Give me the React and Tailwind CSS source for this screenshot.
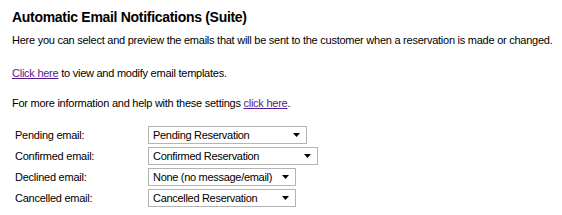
const rows = [
  { label: 'Pending email:', value: 'Pending Reservation', w: 'w-[159px]' },
  { label: 'Confirmed email:', value: 'Confirmed Reservation', w: 'w-[170px]' },
  { label: 'Declined email:', value: 'None (no message/email)', w: 'w-[148px]' },
  { label: 'Cancelled email:', value: 'Cancelled Reservation', w: 'w-[148px]' },
];

const FakeSelect = ({ value, w }) => (
  <div className={`${w} h-[18px] flex items-center justify-between border border-[#b4b4b4] bg-white pl-[4px] pr-[6px]`}>
    <span className="text-[11px] tracking-[-0.3px] leading-none text-black whitespace-nowrap">{value}</span>
    <svg width="7" height="4" viewBox="0 0 7 4"><path d="M0 0h7L3.5 4z" fill="#000" /></svg>
  </div>
);

export default function App() {
  return (
    <div className="w-[562px] h-[215px] overflow-hidden bg-white text-black px-[12px] pt-[7px]" style={{ fontFamily: '"Liberation Sans", Arial, sans-serif' }}>
      <h1 className="text-[14px] tracking-[-0.3px] font-bold leading-[20px]">Automatic Email Notifications (Suite)</h1>
      <p className="text-[11px] tracking-[-0.25px] leading-[13px] mt-[7px] whitespace-nowrap">
        Here you can select and preview the emails that will be sent to the customer when a reservation is made or changed.
      </p>
      <p className="text-[11px] tracking-[-0.25px] leading-[13px] mt-[20px]">
        <span className="text-[#551a8b] underline">Click here</span> to view and modify email templates.
      </p>
      <p className="text-[11px] tracking-[-0.25px] leading-[13px] mt-[17px]">
        For more information and help with these settings <span className="text-[#551a8b] underline">click here</span>.
      </p>
      <div className="mt-[16px] ml-[3px] flex flex-col gap-[3px]">
        {rows.map(r => (
          <div key={r.label} className="flex items-center">
            <span className="w-[133px] text-[11px] tracking-[-0.25px] leading-[13px]">{r.label}</span>
            <FakeSelect value={r.value} w={r.w} />
          </div>
        ))}
      </div>
    </div>
  );
}
